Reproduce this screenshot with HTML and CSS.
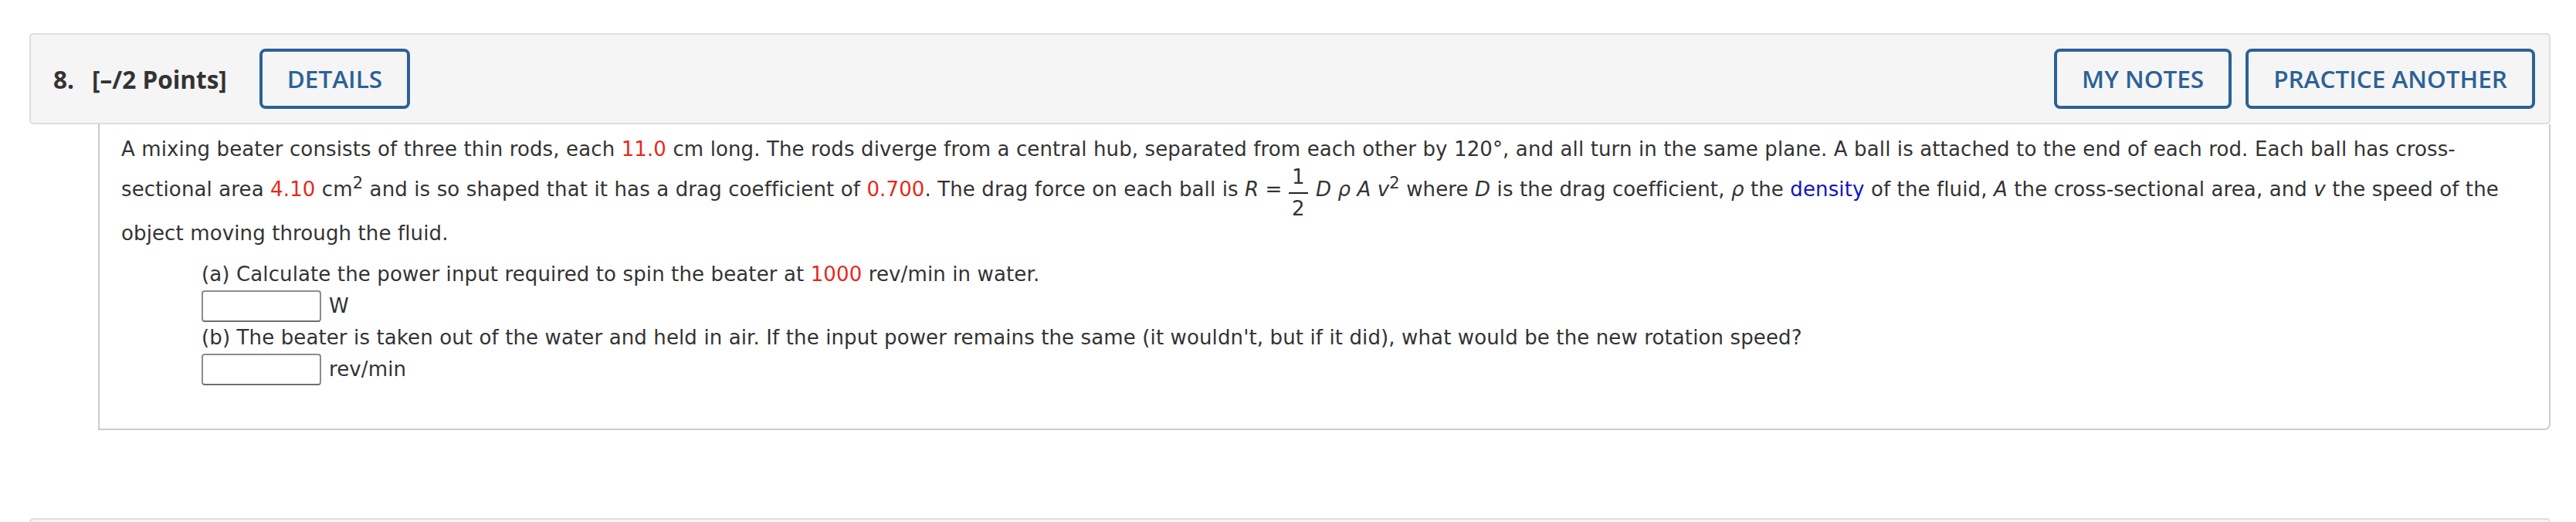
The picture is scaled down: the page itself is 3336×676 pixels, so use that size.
FILE: index.html
```html
<!DOCTYPE html>
<html>
<head>
<meta charset="utf-8">
<link rel="stylesheet" href="styles.css">
</head>
<body>
<div class="question">
  <div class="q-header">
    <div class="q-title"><span class="q-num">8.</span><span class="q-points">[–/2 Points]</span><button class="btn btn-details">DETAILS</button></div>
    <div class="q-actions"><button class="btn">MY NOTES</button><button class="btn">PRACTICE ANOTHER</button></div>
  </div>
  <div class="q-body">
    <p class="q-text">A mixing beater consists of three thin rods, each <span class="red">11.0</span> cm long. The rods diverge from a central hub, separated from each other by 120°, and all turn in the same plane. A ball is attached to the end of each rod. Each ball has cross-<br>sectional area <span class="red">4.10</span> cm<sup>2</sup> and is so shaped that it has a drag coefficient of <span class="red">0.700</span>. The drag force on each ball is <i>R</i> = <span class="frac"><span class="num">1</span><span class="bar"></span><span class="den">2</span></span> <i>D</i> <i>ρ</i> <i>A</i> <i>v</i><sup>2</sup> where <i>D</i> is the drag coefficient, <i>ρ</i> the <a class="link">density</a> of the fluid, <i>A</i> the cross-sectional area, and <i>v</i> the speed of the<br>object moving through the fluid.</p>
    <div class="parts">
      <div class="part-text">(a) Calculate the power input required to spin the beater at <span class="red">1000</span> rev/min in water.</div>
      <div class="answer"><span class="input"></span><span class="unit">W</span></div>
      <div class="part-text">(b) The beater is taken out of the water and held in air. If the input power remains the same (it wouldn't, but if it did), what would be the new rotation speed?</div>
      <div class="answer"><span class="input"></span><span class="unit">rev/min</span></div>
    </div>
  </div>
</div>
<div class="question next">
  <div class="q-header q-header-next"></div>
</div>
</body>
</html>
```
FILE: styles.css
```css
html, body {
  margin: 0;
  background: #fff;
}
body {
  padding: 43px 33px 0 38px;
  font-family: "DejaVu Sans", Verdana, sans-serif;
  color: #333;
  overflow: hidden;
  height: 676px;
  box-sizing: border-box;
}
.q-header {
  display: flex;
  align-items: center;
  justify-content: space-between;
  background: #f5f5f5;
  border: 2px solid #dedede;
  border-radius: 5px;
  padding: 18px 18px 18px 29px;
  font-family: "Open Sans", sans-serif;
}
.q-title {
  display: flex;
  align-items: center;
  font-weight: 700;
  font-size: 31.5px;
  color: #333;
}
.q-num {
  margin-right: 23px;
}
.q-points {
  margin-right: 42px;
}
.q-actions {
  display: flex;
  gap: 18px;
}
.btn {
  font-family: "Open Sans", sans-serif;
  font-weight: 600;
  font-size: 31.5px;
  color: #2b6296;
  background: #f5f5f5;
  border: 4px solid #2b6296;
  border-radius: 8px;
  height: 78px;
  padding: 0 32px;
  box-sizing: border-box;
  line-height: 1;
}
.q-body {
  margin-left: 89px;
  border: 2px solid #cbcbcb;
  border-top: none;
  border-bottom-right-radius: 8px;
  padding: 6px 28px 56px 28px;
  font-size: 26px;
  letter-spacing: 0.12px;
}
.q-text {
  margin: 0;
  line-height: 52px;
  white-space: nowrap;
}
.red {
  color: #e8281c;
}
.link {
  color: #1212c8;
}
sup {
  font-size: 21px;
  line-height: 0;
  vertical-align: 10px;
}
.frac {
  display: inline-flex;
  flex-direction: column;
  align-items: center;
  vertical-align: 16px;
  line-height: 26px;
  margin: -3px 2px -7px 0;
}
.num {
  padding: 0 4px 7px;
}
.den {
  padding: 6px 4px 0;
}
.bar {
  align-self: stretch;
  height: 2px;
  background: #222;
}
.parts {
  margin: 7px 0 0 104px;
  white-space: nowrap;
}
.part-text {
  line-height: 41px;
}
.answer {
  display: flex;
  align-items: center;
  height: 41px;
}
.input {
  display: block;
  width: 155px;
  height: 41px;
  box-sizing: border-box;
  border: 2px solid #8c8c8c;
  border-bottom-color: #6e6e6e;
  border-radius: 4px;
  background: #fff;
  margin-right: 10px;
}
.unit {
  line-height: 41px;
}
.next {
  margin-top: 114px;
}
.q-header-next {
  height: 3px;
  padding: 0;
  border-bottom: none;
  border-radius: 5px 5px 0 0;
}
```
